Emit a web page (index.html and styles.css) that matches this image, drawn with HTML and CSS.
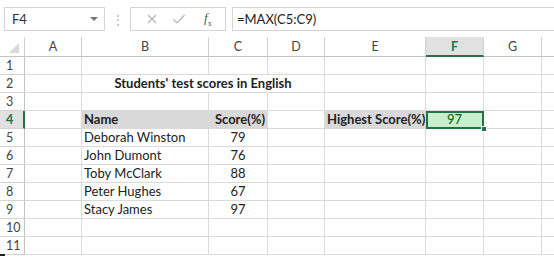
FILE: index.html
```html
<!DOCTYPE html>
<html lang="en">
<head>
  <meta charset="UTF-8">
  <title>Students' test scores</title>
  <link rel="stylesheet" href="styles.css">
</head>
<body>

  <!-- FORMULA BAR -->
  <div class="formula-bar">
    <div class="name-box">
      <span>F4</span>
      <span class="arrow"></span>
    </div>
    <div class="grip">&#8942;</div>
    <div class="fx-buttons">
      <svg class="btn-icon" width="12" height="12" viewBox="0 0 12 12"><path d="M2 2 L10 10 M10 2 L2 10" stroke="#b5b5b5" stroke-width="1.2" fill="none"/></svg>
      <svg class="btn-icon" width="14" height="12" viewBox="0 0 14 12"><path d="M1.5 6.5 L5 10 L12.5 2" stroke="#b5b5b5" stroke-width="1.2" fill="none"/></svg>
      <span class="fx"><i>f</i><sub>x</sub></span>
    </div>
    <div class="formula-input">=MAX(C5:C9)</div>
  </div>

  <!-- SHEET -->
  <div class="sheet">
    <div class="hd corner"><span class="tri"></span></div>
    <div class="hd">A</div>
    <div class="hd">B</div>
    <div class="hd">C</div>
    <div class="hd">D</div>
    <div class="hd">E</div>
    <div class="hd active-col">F</div>
    <div class="hd">G</div>
    <div class="hd edge"></div>

    <!-- row 1 -->
    <div class="rh">1</div>
    <div class="c"></div><div class="c"></div><div class="c"></div><div class="c"></div>
    <div class="c"></div><div class="c"></div><div class="c"></div><div class="c edge"></div>

    <!-- row 2 -->
    <div class="rh">2</div>
    <div class="c"></div>
    <div class="c title span3">Students' test scores in English</div>
    <div class="c"></div><div class="c"></div><div class="c"></div><div class="c edge"></div>

    <!-- row 3 -->
    <div class="rh">3</div>
    <div class="c"></div><div class="c"></div><div class="c"></div><div class="c"></div>
    <div class="c"></div><div class="c"></div><div class="c"></div><div class="c edge"></div>

    <!-- row 4 -->
    <div class="rh active-row">4</div>
    <div class="c"></div>
    <div class="c head">Name</div>
    <div class="c head right">Score(%)</div>
    <div class="c"></div>
    <div class="c head">Highest Score(%)</div>
    <div class="c result">97<span class="handle"></span></div>
    <div class="c"></div><div class="c edge"></div>

    <!-- rows 5-9 -->
    <div class="rh">5</div>
    <div class="c"></div><div class="c">Deborah Winston</div><div class="c center">79</div>
    <div class="c"></div><div class="c"></div><div class="c"></div><div class="c"></div><div class="c edge"></div>

    <div class="rh">6</div>
    <div class="c"></div><div class="c">John Dumont</div><div class="c center">76</div>
    <div class="c"></div><div class="c"></div><div class="c"></div><div class="c"></div><div class="c edge"></div>

    <div class="rh">7</div>
    <div class="c"></div><div class="c">Toby McClark</div><div class="c center">88</div>
    <div class="c"></div><div class="c"></div><div class="c"></div><div class="c"></div><div class="c edge"></div>

    <div class="rh">8</div>
    <div class="c"></div><div class="c">Peter Hughes</div><div class="c center">67</div>
    <div class="c"></div><div class="c"></div><div class="c"></div><div class="c"></div><div class="c edge"></div>

    <div class="rh">9</div>
    <div class="c"></div><div class="c">Stacy James</div><div class="c center">97</div>
    <div class="c"></div><div class="c"></div><div class="c"></div><div class="c"></div><div class="c edge"></div>

    <!-- rows 10-11 -->
    <div class="rh">10</div>
    <div class="c"></div><div class="c"></div><div class="c"></div><div class="c"></div>
    <div class="c"></div><div class="c"></div><div class="c"></div><div class="c edge"></div>

    <div class="rh">11</div>
    <div class="c"></div><div class="c"></div><div class="c"></div><div class="c"></div>
    <div class="c"></div><div class="c"></div><div class="c"></div><div class="c edge"></div>
  </div>

  <span class="mark"></span>

</body>
</html>
```

FILE: styles.css
```css
/* ---------- BASE ---------- */
* {
  margin: 0;
  padding: 0;
  box-sizing: border-box;
}
body {
  background: #ffffff;
  color: #222;
  font-family: Lato, "Open Sans", sans-serif;
  font-size: 13px;
  width: 554px;
  height: 261px;
  overflow: hidden;
  position: relative;
}

/* ---------- FORMULA BAR ---------- */
.formula-bar {
  display: flex;
  align-items: center;
  height: 37px;
  padding: 7px 0 6px 4px;
}
.name-box {
  width: 101px;
  height: 24px;
  border: 1px solid #d4d4d4;
  display: flex;
  align-items: center;
  justify-content: space-between;
  padding: 0 6px 0 7px;
  color: #333;
}
.arrow {
  width: 0;
  height: 0;
  border-left: 4px solid transparent;
  border-right: 4px solid transparent;
  border-top: 4px solid #777;
}
.grip {
  width: 25px;
  text-align: center;
  color: #b0b0b0;
  font-size: 12px;
}
.fx-buttons {
  width: 96px;
  height: 24px;
  border: 1px solid #d4d4d4;
  display: flex;
  align-items: center;
  gap: 14px;
  padding-left: 15px;
}
.fx {
  font-family: "Liberation Serif", serif;
  color: #555;
  font-size: 13px;
  margin-left: 4px;
}
.fx sub {
  font-size: 8px;
}
.formula-input {
  flex: 1;
  height: 24px;
  margin-left: 6px;
  border-top: 1px solid #d4d4d4;
  border-bottom: 1px solid #d4d4d4;
  border-left: 1px solid #d4d4d4;
  padding-left: 4px;
  line-height: 22px;
  color: #222;
}

/* ---------- SHEET GRID ---------- */
.sheet {
  display: grid;
  grid-template-columns: 25px 57px 127px 59px 57px 101px 58px 58px 12px;
  grid-template-rows: 20px repeat(11, 18px);
}
.hd {
  border-right: 1px solid #d0d0d0;
  border-bottom: 1px solid #c4c4c4;
  text-align: center;
  color: #444;
  line-height: 19px;
  font-size: 12.5px;
}
.hd.edge {
  border-right: none;
}
.corner {
  position: relative;
}
.tri {
  position: absolute;
  right: 5px;
  bottom: 3px;
  width: 0;
  height: 0;
  border-left: 10px solid transparent;
  border-bottom: 10px solid #d8d8d8;
}
.active-col {
  background: #e1e1e1;
  color: #217346;
  font-weight: bold;
  border-bottom: 2px solid #217346;
}
.rh {
  border-right: 1px solid #c4c4c4;
  border-bottom: 1px solid #d4d4d4;
  color: #444;
  padding-left: 6px;
  line-height: 17px;
  font-size: 12.5px;
}
.active-row {
  background: #e1e1e1;
  color: #217346;
  font-weight: bold;
  border-right: 2px solid #217346;
}
.c {
  border-right: 1px solid #dadada;
  border-bottom: 1px solid #dadada;
  line-height: 17px;
  padding: 0 2px;
  white-space: nowrap;
  overflow: visible;
}
.c.edge {
  border-right: none;
}
.span3 {
  grid-column: span 3;
}
.title {
  font-weight: bold;
  text-align: center;
}
.head {
  background: #d9d9d9;
  font-weight: bold;
}
.right {
  text-align: right;
}
.center {
  text-align: center;
}
.result {
  position: relative;
  background: #c6efce;
  color: #006100;
  text-align: center;
  outline: 2px solid #217346;
  outline-offset: -2px;
}
.handle {
  position: absolute;
  right: -4px;
  bottom: -4px;
  width: 6px;
  height: 6px;
  background: #217346;
  border: 1px solid #fff;
}

/* petit trait en bas a gauche */
.mark {
  position: absolute;
  left: 0;
  top: 254px;
  width: 5px;
  height: 2px;
  background: #222;
}
```
